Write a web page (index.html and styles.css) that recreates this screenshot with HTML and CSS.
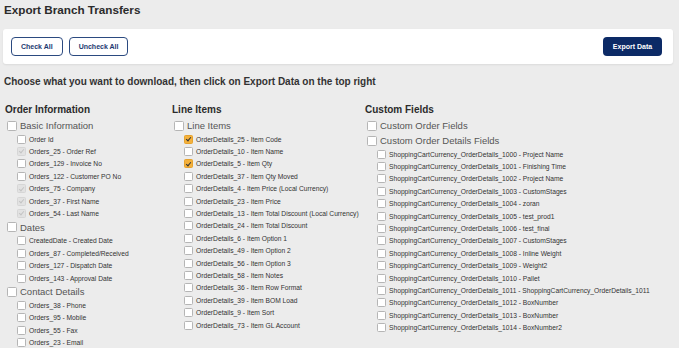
FILE: index.html
```html
<!DOCTYPE html>
<html lang="en">
<head>
    <meta charset="UTF-8">
    <title>Export Branch Transfers</title>
    <link rel="stylesheet" href="styles.css">
</head>
<body>
    <h1 class="page-title">Export Branch Transfers</h1>

    <div class="toolbar">
        <div class="toolbar-left">
            <button class="btn btn-outline">Check All</button>
            <button class="btn btn-outline">Uncheck All</button>
        </div>
        <button class="btn btn-primary">Export Data</button>
    </div>

    <p class="intro">Choose what you want to download, then click on Export Data on the top right</p>

    <div class="columns">
        <div class="column col-order">
            <h3 class="col-title">Order Information</h3>

            <div class="group"><span class="cb"></span>Basic Information</div>
            <div class="item"><span class="cb"></span>Order Id</div>
            <div class="item"><span class="cb dis"></span>Orders_25 - Order Ref</div>
            <div class="item"><span class="cb"></span>Orders_129 - Invoice No</div>
            <div class="item"><span class="cb"></span>Orders_122 - Customer PO No</div>
            <div class="item"><span class="cb dis"></span>Orders_75 - Company</div>
            <div class="item"><span class="cb dis"></span>Orders_37 - First Name</div>
            <div class="item"><span class="cb dis"></span>Orders_54 - Last Name</div>

            <div class="group"><span class="cb"></span>Dates</div>
            <div class="item"><span class="cb"></span>CreatedDate - Created Date</div>
            <div class="item"><span class="cb"></span>Orders_87 - Completed/Received</div>
            <div class="item"><span class="cb"></span>Orders_127 - Dispatch Date</div>
            <div class="item"><span class="cb"></span>Orders_143 - Approval Date</div>

            <div class="group"><span class="cb"></span>Contact Details</div>
            <div class="item"><span class="cb"></span>Orders_38 - Phone</div>
            <div class="item"><span class="cb"></span>Orders_95 - Mobile</div>
            <div class="item"><span class="cb"></span>Orders_55 - Fax</div>
            <div class="item"><span class="cb"></span>Orders_23 - Email</div>
        </div>

        <div class="column col-lines">
            <h3 class="col-title">Line Items</h3>

            <div class="group"><span class="cb"></span>Line Items</div>
            <div class="item"><span class="cb on"></span>OrderDetails_25 - Item Code</div>
            <div class="item"><span class="cb"></span>OrderDetails_10 - Item Name</div>
            <div class="item"><span class="cb on"></span>OrderDetails_5 - Item Qty</div>
            <div class="item"><span class="cb"></span>OrderDetails_37 - Item Qty Moved</div>
            <div class="item"><span class="cb"></span>OrderDetails_4 - Item Price (Local Currency)</div>
            <div class="item"><span class="cb"></span>OrderDetails_23 - Item Price</div>
            <div class="item"><span class="cb"></span>OrderDetails_13 - Item Total Discount (Local Currency)</div>
            <div class="item"><span class="cb"></span>OrderDetails_24 - Item Total Discount</div>
            <div class="item"><span class="cb"></span>OrderDetails_6 - Item Option 1</div>
            <div class="item"><span class="cb"></span>OrderDetails_49 - Item Option 2</div>
            <div class="item"><span class="cb"></span>OrderDetails_56 - Item Option 3</div>
            <div class="item"><span class="cb"></span>OrderDetails_58 - Item Notes</div>
            <div class="item"><span class="cb"></span>OrderDetails_36 - Item Row Format</div>
            <div class="item"><span class="cb"></span>OrderDetails_39 - Item BOM Load</div>
            <div class="item"><span class="cb"></span>OrderDetails_9 - Item Sort</div>
            <div class="item"><span class="cb"></span>OrderDetails_73 - Item GL Account</div>
        </div>

        <div class="column col-custom">
            <h3 class="col-title">Custom Fields</h3>

            <div class="group"><span class="cb"></span>Custom Order Fields</div>
            <div class="group"><span class="cb"></span>Custom Order Details Fields</div>
            <div class="item"><span class="cb"></span>ShoppingCartCurrency_OrderDetails_1000 - Project Name</div>
            <div class="item"><span class="cb"></span>ShoppingCartCurrency_OrderDetails_1001 - Finishing Time</div>
            <div class="item"><span class="cb"></span>ShoppingCartCurrency_OrderDetails_1002 - Project Name</div>
            <div class="item"><span class="cb"></span>ShoppingCartCurrency_OrderDetails_1003 - CustomStages</div>
            <div class="item"><span class="cb"></span>ShoppingCartCurrency_OrderDetails_1004 - zoran</div>
            <div class="item"><span class="cb"></span>ShoppingCartCurrency_OrderDetails_1005 - test_prod1</div>
            <div class="item"><span class="cb"></span>ShoppingCartCurrency_OrderDetails_1006 - test_final</div>
            <div class="item"><span class="cb"></span>ShoppingCartCurrency_OrderDetails_1007 - CustomStages</div>
            <div class="item"><span class="cb"></span>ShoppingCartCurrency_OrderDetails_1008 - Inline Weight</div>
            <div class="item"><span class="cb"></span>ShoppingCartCurrency_OrderDetails_1009 - Weight2</div>
            <div class="item"><span class="cb"></span>ShoppingCartCurrency_OrderDetails_1010 - Pallet</div>
            <div class="item"><span class="cb"></span>ShoppingCartCurrency_OrderDetails_1011 - ShoppingCartCurrency_OrderDetails_1011</div>
            <div class="item"><span class="cb"></span>ShoppingCartCurrency_OrderDetails_1012 - BoxNumber</div>
            <div class="item"><span class="cb"></span>ShoppingCartCurrency_OrderDetails_1013 - BoxNumber</div>
            <div class="item"><span class="cb"></span>ShoppingCartCurrency_OrderDetails_1014 - BoxNumber2</div>
        </div>
    </div>
</body>
</html>
```

FILE: styles.css
```css
body {
    font-family: "Liberation Sans", Arial, sans-serif;
    background-color: #ececec;
    color: #333;
    margin: 0;
    padding: 0 6px 0 4px;
}
.page-title {
    font-size: 11.7px;
    font-weight: bold;
    color: #2b2b2b;
    line-height: 14px;
    margin: 0;
    padding-top: 3px;
}
.toolbar {
    display: flex;
    justify-content: space-between;
    align-items: center;
    background-color: white;
    border-radius: 3px;
    margin: 12px 0 0 -1px;
    padding: 8px 11px 8px 8px;
    box-shadow: 0 1px 2px rgba(0,0,0,0.08);
}
.toolbar-left {
    display: flex;
    gap: 6px;
}
.btn {
    font-family: "Liberation Sans", Arial, sans-serif;
    font-size: 7px;
    font-weight: bold;
    height: 19px;
    padding: 0 9px;
    border-radius: 4px;
    cursor: pointer;
}
.btn-outline {
    background-color: white;
    color: #1c3a70;
    border: 1.3px solid #2b4a80;
}
.btn-primary {
    background-color: #0c2a66;
    color: white;
    border: none;
    width: 59px;
}
.intro {
    font-size: 10px;
    font-weight: bold;
    color: #333;
    line-height: 12px;
    margin: 12px 0 0;
}
.columns {
    display: flex;
    margin-top: 13px;
}
.column {
    flex-shrink: 0;
}
.col-order {
    width: 167px;
    padding-left: 1px;
}
.col-lines {
    width: 193px;
}
.col-custom {
    flex: 1;
}
.col-title {
    font-size: 10px;
    font-weight: bold;
    color: #2b2b2b;
    line-height: 17px;
    margin: 0;
}
.group {
    display: flex;
    align-items: center;
    font-size: 9.5px;
    color: #555;
    line-height: 15px;
    height: 15px;
    padding-left: 2px;
}
.group .cb {
    width: 8px;
    height: 8px;
    margin-right: 3px;
}
.item {
    display: flex;
    align-items: center;
    font-size: 6.7px;
    color: #333;
    height: 12.4px;
    padding-left: 12px;
    white-space: nowrap;
}
.item .cb {
    width: 7px;
    height: 7px;
    margin-right: 3px;
}
.cb {
    display: inline-block;
    position: relative;
    flex-shrink: 0;
    background-color: white;
    border: 0.6px solid #b5b5b5;
    border-radius: 1.5px;
}
.cb.on {
    background-color: #f4b13c;
    border-color: #e6a22d;
}
.cb.dis {
    background-color: #e2e2e2;
    border-color: #d6d6d6;
}
.cb.on::after,
.cb.dis::after {
    content: "";
    position: absolute;
    left: 2.2px;
    top: 0.3px;
    width: 2px;
    height: 4px;
    border: solid #333;
    border-width: 0 1.2px 1.2px 0;
    transform: rotate(40deg);
}
.cb.dis::after {
    border-color: #c4c4c4;
}
```
